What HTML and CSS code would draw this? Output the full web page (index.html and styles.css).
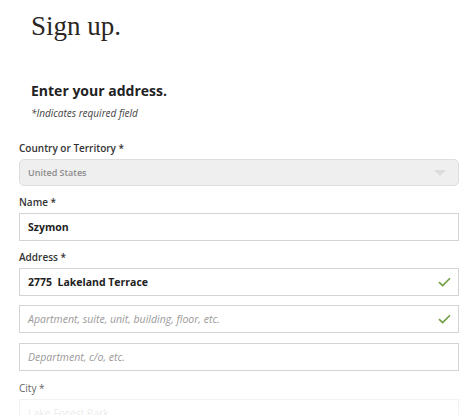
FILE: index.html
```html
<!DOCTYPE html>
<html>
<head>
<meta charset="utf-8">
<link rel="stylesheet" href="styles.css">
</head>
<body>
<div class="page">
  <header class="intro">
    <h1 class="title">Sign up.</h1>
    <h2 class="subtitle">Enter your address.</h2>
    <p class="note">*Indicates required field</p>
  </header>
  <form class="form">
    <div class="field">
      <label class="label">Country or Territory *</label>
      <div class="select">
        <span class="select-value">United States</span>
        <svg class="chevron" width="12" height="6" viewBox="0 0 12 6"><path d="M0 0 H12 L6 6 Z" fill="#dcdcdc"/></svg>
      </div>
    </div>
    <div class="field">
      <label class="label">Name *</label>
      <div class="input"><span class="value">Szymon</span></div>
    </div>
    <div class="field">
      <label class="label">Address *</label>
      <div class="input"><span class="value">2775&nbsp; Lakeland Terrace</span>
        <svg class="check" width="13" height="10" viewBox="0 0 13 10"><path d="M1 5.2 L4.6 8.6 L12 1.2" fill="none" stroke="#6f9e3e" stroke-width="1.6"/></svg>
      </div>
    </div>
    <div class="field extra">
      <div class="input"><span class="placeholder">Apartment, suite, unit, building, floor, etc.</span>
        <svg class="check" width="13" height="10" viewBox="0 0 13 10"><path d="M1 5.2 L4.6 8.6 L12 1.2" fill="none" stroke="#6f9e3e" stroke-width="1.6"/></svg>
      </div>
    </div>
    <div class="field extra">
      <div class="input"><span class="placeholder">Department, c/o, etc.</span></div>
    </div>
    <div class="field faded">
      <label class="label">City *</label>
      <div class="input"><span class="value">Lake Forest Park</span></div>
    </div>
  </form>
</div>
</body>
</html>
```

FILE: styles.css
```css
html, body {
  margin: 0;
  padding: 0;
  background: #fff;
}
body {
  font-family: "Open Sans", "Noto Sans", sans-serif;
  color: #2c2c2c;
  overflow: hidden;
}
.page {
  padding: 0 15px 0 19px;
}
.intro {
  padding-left: 12px;
}
.title {
  margin: 0;
  padding-top: 10px;
  font-family: "Liberation Serif", "DejaVu Serif", serif;
  font-weight: normal;
  font-size: 27px;
  line-height: 32px;
  color: #2b2523;
}
.subtitle {
  margin: 40px 0 0;
  font-size: 14px;
  line-height: 18px;
  font-weight: 700;
  color: #222;
}
.note {
  margin: 6px 0 0;
  font-size: 10px;
  line-height: 14px;
  font-style: italic;
  color: #444;
}
.form {
  margin-top: 21px;
  display: flex;
  flex-direction: column;
}
.field {
  display: flex;
  flex-direction: column;
  margin-bottom: 9px;
}
.field.extra {
  margin-bottom: 10px;
}
.label {
  font-size: 10px;
  line-height: 14px;
  font-weight: 600;
  color: #333;
  margin-bottom: 4px;
}
.select {
  height: 25px;
  border: 1px solid #dedede;
  border-radius: 5px;
  background: #efefef;
  display: flex;
  align-items: center;
  justify-content: space-between;
  padding: 0 12px 0 8px;
}
.select-value {
  font-size: 9px;
  font-weight: 600;
  color: #8c8c8c;
}
.input {
  height: 26px;
  border: 1px solid #d4d4d4;
  background: #fff;
  display: flex;
  align-items: center;
  justify-content: space-between;
  padding: 0 7px 0 8px;
}
.value {
  font-size: 10.5px;
  font-weight: 700;
  color: #222;
}
.placeholder {
  font-size: 10.5px;
  font-style: italic;
  color: #9a9a9a;
}
.faded .label {
  color: #666;
  font-weight: 400;
}
.faded .input {
  border-color: #f2f2f2;
}
.faded .value {
  color: #ececec;
  font-weight: 400;
}
```
